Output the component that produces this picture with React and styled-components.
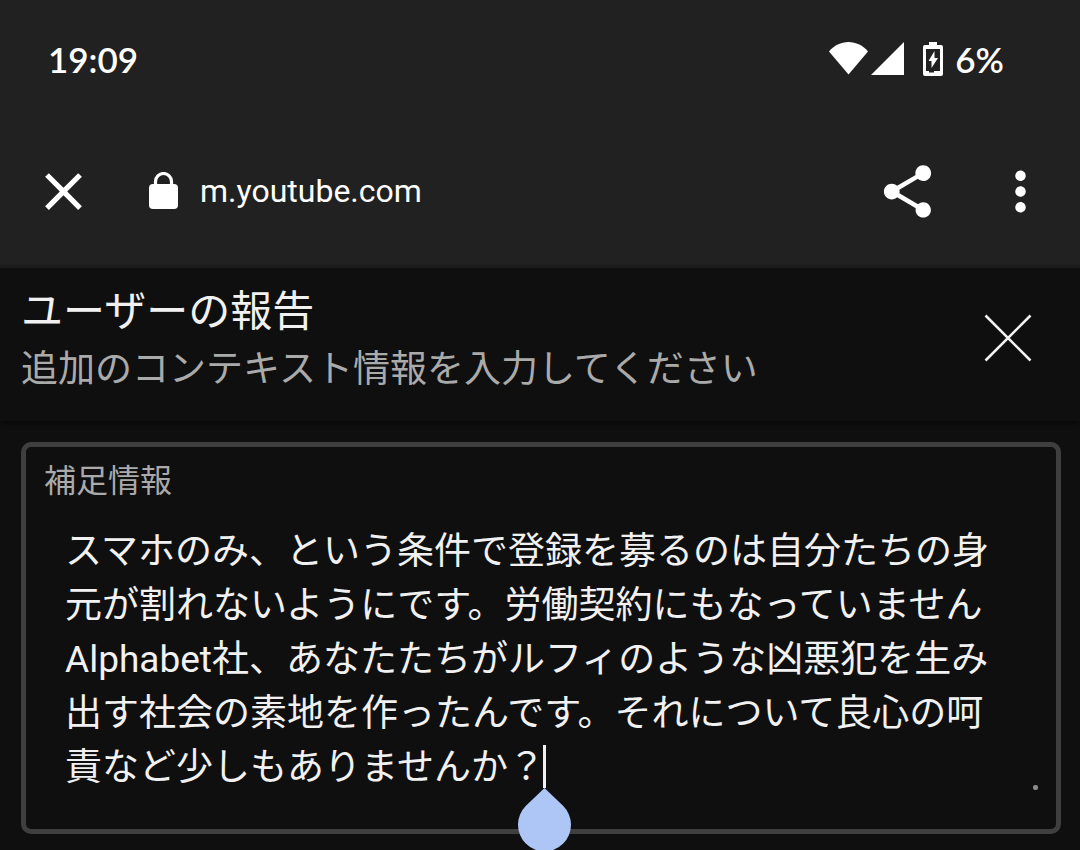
import React, { useState } from 'react';
import styled, { createGlobalStyle } from 'styled-components';
import { MdClose, MdMoreVert, MdShare } from 'react-icons/md';

const GlobalStyle = createGlobalStyle`
  * {
    box-sizing: border-box;
  }

  body {
    margin: 0;
    background-color: #0f0f0f;
    font-family: Roboto, 'Noto Sans CJK JP', sans-serif;
  }
`;

const Page = styled.div`
  min-height: 100vh;
  overflow: hidden;
  color: #f1f1f1;
`;

const Chrome = styled.header`
  background-color: #212121;
  border-bottom: 3px solid #1d1d1d;
  color: #fff;
`;

const StatusBar = styled.div`
  display: flex;
  align-items: center;
  justify-content: space-between;
  height: 117px;
  padding: 0 76px 0 48px;
  font-family: Lato, sans-serif;
  font-size: 35px;
  font-weight: 600;
`;

const StatusIcons = styled.div`
  display: flex;
  align-items: center;

  svg {
    display: block;
  }
`;

const Battery = styled.span`
  display: flex;
  align-items: center;
  gap: 12px;
  margin-left: 19px;
`;

const Toolbar = styled.div`
  display: flex;
  align-items: center;
  height: 148px;
  padding: 0 28px 0 32px;
`;

const IconButton = styled.button`
  display: flex;
  align-items: center;
  justify-content: center;
  padding: 0;
  border: none;
  background: none;
  color: inherit;
  cursor: pointer;
`;

const Address = styled.a`
  display: flex;
  flex: 1;
  align-items: center;
  gap: 21px;
  margin-left: 53px;
  color: inherit;
  font-size: 32px;
  text-decoration: none;
`;

const Actions = styled.div`
  display: flex;
  gap: 50px;
`;

const DialogHeader = styled.div`
  display: flex;
  align-items: flex-start;
  justify-content: space-between;
  height: 153px;
  padding: 17px 48px 0 21px;
  box-shadow: 0 2px 5px rgba(0, 0, 0, 0.5);
`;

const Title = styled.h1`
  margin: 0;
  font-size: 42px;
  font-weight: 400;
  line-height: 54px;
`;

const Subtitle = styled.p`
  margin: 5px 0 0;
  color: #aaa;
  font-size: 37px;
  line-height: 52px;
`;

const DismissButton = styled(IconButton)`
  margin-top: 29px;
`;

const Field = styled.div`
  position: relative;
  margin: 21px 19px 16px 21px;
  padding: 14px 18px 34px;
  border: 5px solid #3f3f3f;
  border-radius: 10px;
`;

const Label = styled.label`
  display: block;
  color: #aaa;
  font-size: 32px;
  line-height: 40px;
`;

const TextArea = styled.textarea`
  display: block;
  width: 100%;
  height: 294px;
  padding: 24px 21px 0;
  border: none;
  outline: none;
  background: transparent;
  color: #f1f1f1;
  font: inherit;
  font-size: 37px;
  line-height: 54px;
  resize: none;
  overflow: hidden;
`;

const Grip = styled.span`
  position: absolute;
  right: 18px;
  bottom: 39px;
  width: 5px;
  height: 5px;
  border-radius: 2px;
  background-color: #8a8a8a;
`;

const Cursor = styled.div`
  position: absolute;
  top: 298px;
  left: 492px;
  display: flex;
  flex-direction: column;
  align-items: center;
`;

const CaretLine = styled.span`
  width: 3px;
  height: 43px;
  background-color: #f1f1f1;
`;

const WifiIcon = () => (
  <svg width="39" height="33" viewBox="0 0 39 33" fill="currentColor">
    <path d="M19.5 32.5 0 9.5C5 3.5 12 0 19.5 0S34 3.5 39 9.5z" />
  </svg>
);

const SignalIcon = () => (
  <svg width="36" height="33" viewBox="0 0 36 33" fill="currentColor">
    <path d="M36 0v33H3z" />
  </svg>
);

const BatteryIcon = () => (
  <svg width="20" height="34" viewBox="0 0 20 34" fill="currentColor">
    <path
      fillRule="evenodd"
      d="M6 0h8v3h4q2 0 2 2v27q0 2-2 2H2q-2 0-2-2V5q0-2 2-2h4zM3 7v22h3v1.5h5V29h6V7z"
    />
    <path d="M11.5 9v7H15L8.5 26v-7h-3z" />
  </svg>
);

const LockIcon = () => (
  <svg width="31" height="38" viewBox="0 0 31 38" fill="none">
    <rect x="1" y="12" width="29" height="25" rx="4" fill="currentColor" />
    <path d="M7.5 14V9.5a8 8 0 0 1 16 0V14" stroke="currentColor" strokeWidth="3.2" />
  </svg>
);

const ThinCloseIcon = () => (
  <svg width="48" height="48" viewBox="0 0 48 48" fill="none" stroke="currentColor" strokeWidth="2.6">
    <path d="M1.5 1.5l45 45M46.5 1.5l-45 45" />
  </svg>
);

const HandleIcon = () => (
  <svg width="53" height="64" viewBox="0 0 53 64" fill="#aec6f6">
    <path d="M26.5 0 45.3 18.1a26.5 26.5 0 1 1-37.6 0z" />
  </svg>
);

const initialText =
  'スマホのみ、という条件で登録を募るのは自分たちの身元が割れないようにです。労働契約にもなっていません\n' +
  'Alphabet社、あなたたちがルフィのような凶悪犯を生み出す社会の素地を作ったんです。それについて良心の呵責など少しもありませんか？';

const App = () => {
  const [details, setDetails] = useState(initialText);

  return (
    <Page lang="ja">
      <GlobalStyle />
      <Chrome>
        <StatusBar>
          <span>19:09</span>
          <StatusIcons>
            <WifiIcon />
            <SignalIcon />
            <Battery>
              <BatteryIcon />
              6%
            </Battery>
          </StatusIcons>
        </StatusBar>
        <Toolbar>
          <IconButton aria-label="閉じる">
            <MdClose size={63} />
          </IconButton>
          <Address href="https://m.youtube.com">
            <LockIcon />
            m.youtube.com
          </Address>
          <Actions>
            <IconButton aria-label="共有">
              <MdShare size={63} />
            </IconButton>
            <IconButton aria-label="その他">
              <MdMoreVert size={63} />
            </IconButton>
          </Actions>
        </Toolbar>
      </Chrome>
      <DialogHeader>
        <div>
          <Title>ユーザーの報告</Title>
          <Subtitle>追加のコンテキスト情報を入力してください</Subtitle>
        </div>
        <DismissButton aria-label="キャンセル">
          <ThinCloseIcon />
        </DismissButton>
      </DialogHeader>
      <Field>
        <Label htmlFor="details">補足情報</Label>
        <TextArea
          id="details"
          spellCheck={false}
          value={details}
          onChange={(e) => setDetails(e.target.value)}
        />
        <Grip />
        <Cursor>
          <CaretLine />
          <HandleIcon />
        </Cursor>
      </Field>
    </Page>
  );
};

export default App;
